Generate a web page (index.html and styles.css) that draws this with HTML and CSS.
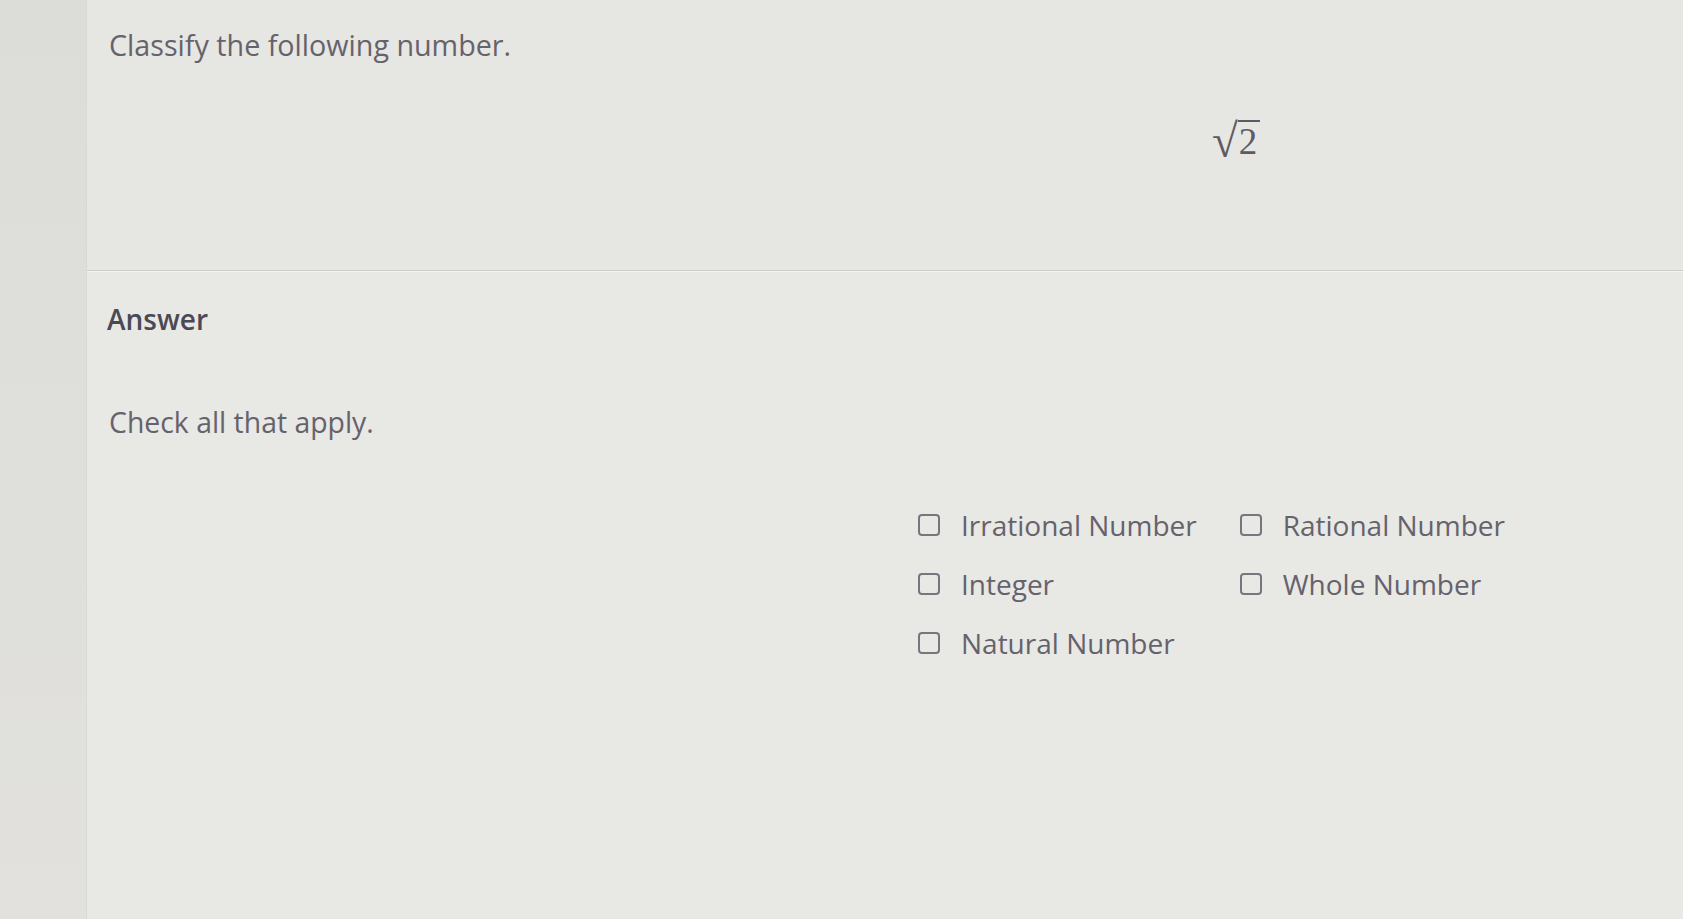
FILE: index.html
```html
<!DOCTYPE html>
<html lang="en">
<head>
<meta charset="utf-8">
<title>Classify the following number</title>
<link rel="stylesheet" href="styles.css">
</head>
<body>
<div class="page">
  <aside class="sidebar"></aside>
  <main class="main">
    <section class="question">
      <p class="prompt">Classify the following number.</p>
      <div class="math-row">
        <span class="math"><span class="rad">√</span><span class="radicand">2</span></span>
      </div>
    </section>
    <section class="answer">
      <h2 class="answer-title">Answer</h2>
      <p class="instruction">Check all that apply.</p>
      <div class="choices">
        <label class="choice"><span class="box"></span><span class="label-text">Irrational Number</span></label>
        <label class="choice"><span class="box"></span><span class="label-text">Rational Number</span></label>
        <label class="choice"><span class="box"></span><span class="label-text">Integer</span></label>
        <label class="choice"><span class="box"></span><span class="label-text">Whole Number</span></label>
        <label class="choice"><span class="box"></span><span class="label-text">Natural Number</span></label>
      </div>
    </section>
  </main>
</div>
</body>
</html>
```

FILE: styles.css
```css
html, body {
  margin: 0;
  padding: 0;
}

body {
  background: #e7e7e3;
  font-family: "Open Sans", "Noto Sans", sans-serif;
  color: #66626c;
  overflow: hidden;
}

.page {
  display: flex;
  width: 1683px;
  height: 919px;
}

.sidebar {
  width: 86px;
  flex: none;
  background: linear-gradient(180deg, #dcdcd8 0%, #dfdfdb 60%, #e2e1dd 100%);
  border-right: 1px solid #d8d8d4;
}

.main {
  flex: 1;
  display: flex;
  flex-direction: column;
  background: #e8e8e4;
}

.question {
  height: 271px;
  box-sizing: border-box;
  padding: 26px 0 0 22px;
  border-bottom: 1px solid #cdcdc9;
  box-shadow: 0 1px 0 #f2f2ef;
  background: #e6e6e2;
}

.prompt {
  margin: 0;
  font-size: 28.7px;
  line-height: 38px;
}

.math-row {
  display: flex;
  padding-left: 1103px;
  margin-top: 52px;
}

.math {
  display: inline-flex;
  align-items: flex-start;
  font-family: "Liberation Serif", "DejaVu Serif", serif;
  color: #5e5a64;
}

.rad {
  font-family: "Liberation Serif", "DejaVu Serif", serif;
  font-size: 47px;
  line-height: 50px;
}

.radicand {
  font-family: "Liberation Serif", "DejaVu Serif", serif;
  font-size: 37px;
  line-height: 40px;
  margin-top: 4px;
  padding: 0 3px 0 1px;
  border-top: 2px solid #5e5a64;
}

.answer {
  padding: 30px 0 0 20px;
}

.answer-title {
  margin: 0;
  font-size: 28px;
  line-height: 36px;
  font-weight: 600;
  color: #4c4954;
}

.instruction {
  margin: 66px 0 0 2px;
  font-size: 28.4px;
  line-height: 38px;
}

.choices {
  display: grid;
  grid-template-columns: auto auto;
  justify-content: start;
  column-gap: 43px;
  row-gap: 21px;
  margin: 65px 0 0 811px;
}

.choice {
  display: flex;
  align-items: center;
  gap: 21px;
  font-size: 28px;
  line-height: 38px;
}

.box {
  width: 22px;
  height: 22px;
  box-sizing: border-box;
  border: 2px solid #79757f;
  border-radius: 4px;
  flex: none;
}
```
